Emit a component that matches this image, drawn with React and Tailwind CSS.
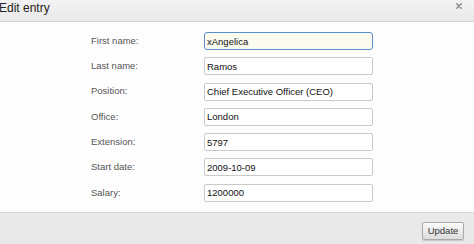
import React from 'react';

const fields = [
  { label: 'First name:', value: 'xAngelica', focused: true },
  { label: 'Last name:', value: 'Ramos' },
  { label: 'Position:', value: 'Chief Executive Officer (CEO)' },
  { label: 'Office:', value: 'London' },
  { label: 'Extension:', value: '5797' },
  { label: 'Start date:', value: '2009-10-09' },
  { label: 'Salary:', value: '1200000' },
];

function App() {
  return (
    <div
      className="w-[474px] h-[244px] flex flex-col bg-white overflow-hidden"
      style={{ fontFamily: '"Liberation Sans", Arial, sans-serif' }}
    >
      {/* Header */}
      <div className="h-[22px] shrink-0 flex items-start justify-between bg-gradient-to-b from-[#f2f2f2] to-[#e9e9e9] border-b border-[#d4d4d4]">
        <h1 className="text-[12px] leading-[15px] pt-[1px] -ml-[1px] text-[#222]">Edit entry</h1>
        <button className="mr-[11px] mt-[2px] w-[8px] h-[8px] flex items-center justify-center">
          <svg width="6" height="6" viewBox="0 0 6 6">
            <path d="M0.8 0.8 L5.2 5.2 M5.2 0.8 L0.8 5.2" stroke="#8a8a8a" strokeWidth="1.5" strokeLinecap="round" />
          </svg>
        </button>
      </div>

      {/* Form */}
      <div className="flex-1 bg-[#fdfdfd] pt-[10px]">
        <div className="flex flex-col gap-[7.3px]">
          {fields.map((f) => (
            <div key={f.label} className="flex items-center h-[18px]">
              <label className="w-[113px] ml-[91px] text-[9.5px] text-[#555]">{f.label}</label>
              <input
                readOnly
                value={f.value}
                className={`w-[169px] h-[18px] px-[2px] text-[9.5px] text-[#111] outline-none ${
                  f.focused
                    ? 'border-[1.5px] border-[#5a8fc9] rounded-[3px] bg-[#fbfbf0]'
                    : 'border border-[#c9c9c9] rounded-[2px] bg-white'
                }`}
              />
            </div>
          ))}
        </div>
      </div>

      {/* Footer */}
      <div className="h-[32px] shrink-0 flex justify-end items-start pt-[9px] pr-[10px] bg-[#e9e9ea] border-t border-[#d8d8d8]">
        <button className="w-[42px] h-[18px] text-[9.5px] text-[#333] border border-[#a9a9a9] rounded-[2px] bg-gradient-to-b from-[#fafafa] to-[#dcdcdc] shadow-[0_1px_1px_rgba(0,0,0,0.15)]">
          Update
        </button>
      </div>
    </div>
  );
}

export default App;
